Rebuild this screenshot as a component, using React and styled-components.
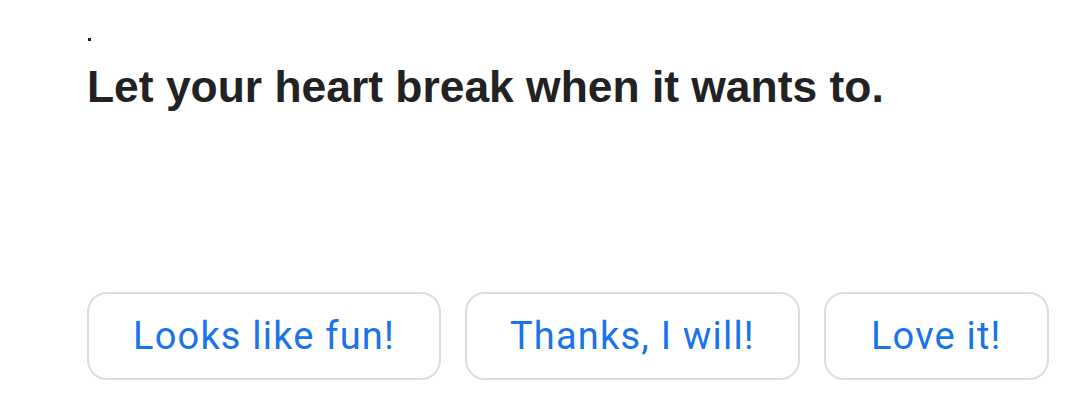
import React from "react";
import styled, { createGlobalStyle } from "styled-components";

const Global = createGlobalStyle`
  html, body { margin: 0; padding: 0; background: #ffffff; }
  body { width: 1080px; height: 416px; overflow: hidden; }
`;

const Page = styled.div`
  width: 1080px;
  height: 416px;
  box-sizing: border-box;
  padding: 0 0 0 87px;
  display: flex;
  flex-direction: column;
  font-family: "Liberation Sans", Arial, sans-serif;
`;

const Dot = styled.div`
  margin-top: 38px;
  margin-left: 1px;
  width: 3px;
  height: 3px;
  background: #222;
`;

const Heading = styled.h1`
  margin: 20px 0 0 0;
  font-size: 44.4px;
  line-height: 52px;
  font-weight: 700;
  color: #222222;
`;

const Replies = styled.div`
  margin-top: 179px;
  display: flex;
  gap: 24px;
`;

const Reply = styled.button`
  height: 88px;
  box-sizing: border-box;
  padding: 0 ${(p) => p.$pad}px;
  border: 2px solid #dadce0;
  border-radius: 20px;
  background: #fff;
  color: #1a73e8;
  font-family: "Roboto", "Noto Sans", sans-serif;
  font-size: 38px;
  letter-spacing: 1.2px;
  font-weight: 400;
  cursor: pointer;
`;

export default function App() {
  return (
    <>
      <Global />
      <Page>
        <Dot />
        <Heading>Let your heart break when it wants to.</Heading>
        <Replies>
          <Reply $pad={44}>Looks like fun!</Reply>
          <Reply $pad={43}>Thanks, I will!</Reply>
          <Reply $pad={45}>Love it!</Reply>
        </Replies>
      </Page>
    </>
  );
}
